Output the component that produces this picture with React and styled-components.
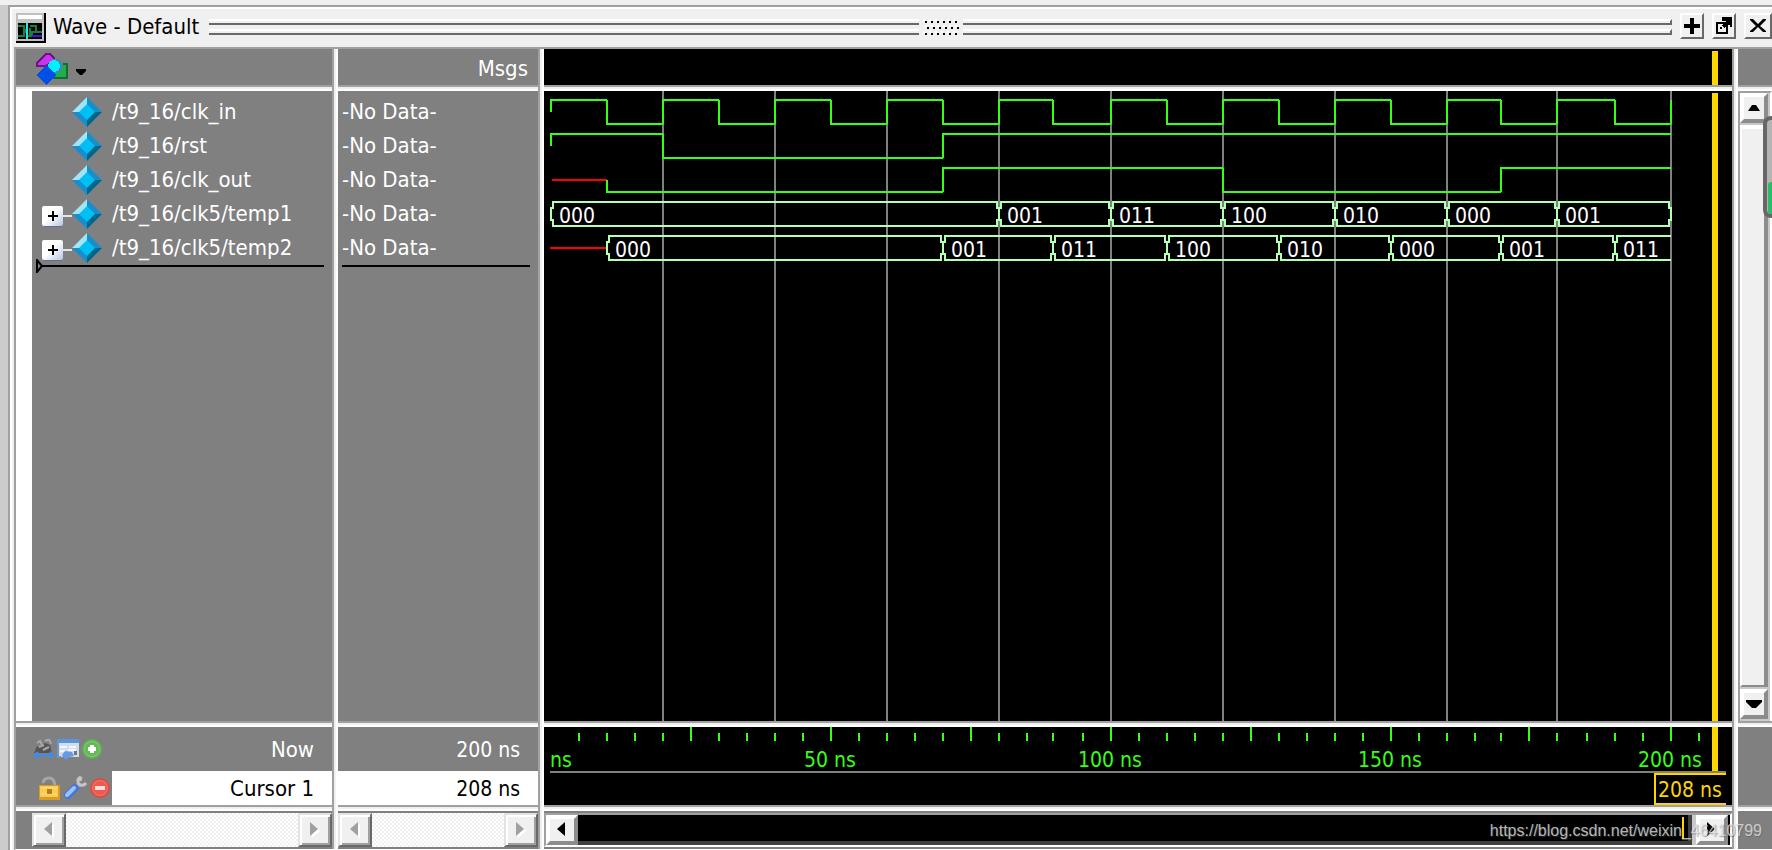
import React from "react";
import styled, { createGlobalStyle, css } from "styled-components";

const C = {
  face: "#f0f0f0",
  pane: "#808080",
  line: "#a0a0a0",
  dark: "#696969",
  green: "#37ff14",
  bus: "#b3ffb3",
  red: "#ff0000",
  gold: "#ffd500",
};
const UI_FONT = '"DejaVu Sans Condensed", "Noto Sans", sans-serif';

const Global = createGlobalStyle`
  * { box-sizing: border-box; }
  body {
    margin: 0;
    background: ${C.face};
    font-family: ${UI_FONT};
    font-size: 22px;
    line-height: 26px;
    color: #000;
  }
  button { font: inherit; padding: 0; margin: 0; border: 0; border-radius: 0; }
  svg { display: block; }
`;

/* ---------- window frame ---------- */
const Page = styled.div`
  position: relative;
  display: flex;
  min-height: 100vh;
  overflow: hidden;
  border-top: 5px solid ${C.face};
  box-shadow: inset 0 2px 0 #fff;
`;
const OuterStrip = styled.div`
  flex: 0 0 8px;
  background: #cccccc;
`;
const Dock = styled.main`
  flex: 1;
  min-width: 0;
  display: flex;
  flex-direction: column;
  border-left: 2px solid ${C.line};
  border-top: 2px solid ${C.line};
  box-shadow: inset 2px 2px 0 #fff, 0 -2px 0 #fff;
`;
const TitleBar = styled.header`
  display: flex;
  align-items: flex-start;
  height: 40px;
  padding: 6px 0 0 6px;
`;
const Title = styled.h1`
  margin: 0 10px 0 7px;
  font-size: 22px;
  font-weight: normal;
  line-height: 28px;
  white-space: nowrap;
`;
const Ridges = styled.div`
  flex: 1;
  display: grid;
  row-gap: 4px;
  padding-top: 6px;
`;
const Ridge = styled.span`
  height: 6px;
  border-top: 2px solid #fff;
  border-bottom: 2px solid ${C.dark};
  border-right: ${(p) => (p.$capped ? `2px solid ${C.dark}` : "0")};
`;
const TitleButtons = styled.div`
  display: flex;
  gap: 8px;
  margin-left: 8px;
`;
const TitleButton = styled.button`
  display: grid;
  place-items: center;
  width: ${(p) => (p.$wide ? 28 : 24)}px;
  height: 26px;
  background: ${C.face};
  border: 2px solid;
  border-color: #fff ${C.dark} ${C.dark} #fff;
`;

/* ---------- columns ---------- */
const Panes = styled.div`
  flex: 1;
  display: grid;
  grid-template-columns: 316px 6px 200px 6px minmax(0, 1fr) 6px 34px;
  margin-left: 4px;
  border-left: 2px solid ${C.line};
  border-top: 2px solid ${C.line};
  border-bottom: 1px solid #fff;
`;
const Sash = styled.div`
  background: linear-gradient(to right, ${C.line} 2px, ${C.face} 2px 4px, #fff 4px);
`;
const Pane = styled.section`
  display: flex;
  flex-direction: column;
  min-width: 0;
  background: ${(p) => (p.$black ? "#000" : C.pane)};
  color: #fff;
`;
const PaneHead = styled.div`
  position: relative;
  display: flex;
  align-items: center;
  justify-content: ${(p) => (p.$end ? "flex-end" : "flex-start")};
  height: 36px;
  padding: 4px 10px 0 20px;
`;
const HSash = styled.div`
  flex: 0 0 6px;
  background: linear-gradient(${C.line} 2px, ${C.face} 2px 4px, #fff 4px);
`;
const PaneBody = styled.div`
  position: relative;
  flex: 1;
  min-height: 0;
  border-left: ${(p) => (p.$gutter ? "16px solid #fff" : "0")};
`;
const PaneFoot = styled.div`
  position: relative;
  height: 78px;
`;
const PaneScroll = styled.div`
  height: 38px;
  padding: 2px 0 2px ${(p) => (p.$indent ? 16 : 0)}px;
`;
const WaveScrollRow = styled(PaneScroll)`
  background: ${C.pane};
`;
const FilterCaret = styled.span`
  margin-left: 8px;
  padding-top: 6px;
`;

/* ---------- signal lists ---------- */
const SignalList = styled.ul`
  list-style: none;
  margin: 0;
  padding: 4px 0 0;
`;
const SignalRow = styled.li`
  display: flex;
  align-items: center;
  height: 34px;
  padding-left: ${(p) => (p.$value ? 4 : 10)}px;
  white-space: nowrap;
`;
const ExpandSlot = styled.span`
  display: flex;
  align-items: center;
  width: 30px;
  padding-top: 4px;
  &::after {
    content: "";
    flex: 1;
    height: 2px;
    background: ${(p) => (p.$on ? "#e6e6e6" : "transparent")};
  }
`;
const ExpandButton = styled.button`
  display: grid;
  place-items: center;
  width: 21px;
  height: 21px;
  border-radius: 2px;
  background: linear-gradient(135deg, #fff 45%, #b4c3e1);
  box-shadow: inset 0 -1px 0 #5f6f8c;
`;
const SignalName = styled.span`
  margin-left: 10px;
`;
const InsertLine = styled.div`
  position: relative;
  height: 2px;
  background: #000;
  margin: 0 8px 0 ${(p) => (p.$marked ? 10 : 4)}px;
`;
const InsertMarker = styled.svg`
  position: absolute;
  left: -6px;
  top: -6px;
`;

/* ---------- footer rows ---------- */
const FootRow = styled.div`
  display: flex;
  align-items: center;
  height: ${(p) => (p.$cursor ? 34 : 44)}px;
  color: ${(p) => (p.$cursor ? "#000" : "#fff")};
`;
const FootIcons = styled.div`
  display: flex;
  align-items: center;
  gap: 3px;
  flex: 0 0 96px;
  padding-left: ${(p) => (p.$shift ? 23 : 18)}px;
`;
const IconButton = styled.button`
  background: transparent;
`;
const FootText = styled.span`
  flex: 1;
  height: 100%;
  display: flex;
  align-items: center;
  justify-content: flex-end;
  padding: 2px 18px 0 0;
  font-size: ${(p) => (p.$number ? 21 : 22)}px;
  background: ${(p) => (p.$cursor ? "#fff" : "transparent")};
`;

/* ---------- scrollbars ---------- */
const ScrollTrack = styled.div`
  display: flex;
  height: 34px;
  ${(p) =>
    p.$wave
      ? css`
          background: #000;
          border: 2px solid;
          border-color: ${C.line} #fff #fff ${C.line};
          padding-right: 2px;
        `
      : css`
          background: repeating-conic-gradient(${C.face} 0 25%, #fff 0 50%) 0 0 / 4px 4px;
        `}
`;
const ScrollButton = styled.button`
  display: grid;
  place-items: center;
  width: 34px;
  height: 100%;
  background: ${C.face};
  border: 2px solid;
  border-color: #e3e3e3 ${C.dark} ${C.dark} #e3e3e3;
  box-shadow: inset 2px 2px 0 #fff, inset -2px -2px 0 ${C.line};
`;
const WaveScrollButton = styled.button`
  display: grid;
  place-items: center;
  width: 32px;
  height: 100%;
  background: ${C.face};
  border: 4px solid;
  border-color: #fff #8c8c8c #8c8c8c #fff;
`;
const Spring = styled.div`
  flex: 1;
  display: flex;
  justify-content: flex-end;
  ${(p) =>
    p.$wave &&
    css`
      padding: 2px 4px 2px 0;
      border: solid;
      border-width: 0 4px 4px 0;
      border-color: #404040;
      box-shadow: 4px 0 0 #c8c8c8;
      margin-right: 4px;
    `}
`;
const CursorTick = styled.span`
  width: 2px;
  background: ${C.gold};
`;
const VScroll = styled.div`
  height: 100%;
  display: flex;
  flex-direction: column;
  gap: 2px;
  padding: 0 2px 2px 0;
  background: #c8c8c8;
  border-left: 2px solid ${C.line};
  border-top: 2px solid ${C.line};
  border-right: 2px solid #fff;
`;
const VButton = styled.button`
  display: grid;
  place-items: center;
  height: 30px;
  background: ${C.face};
  border: 4px solid;
  border-color: #fff #8c8c8c #8c8c8c #fff;
`;
const VThumb = styled.div`
  flex: 1;
  background: ${C.face};
  border: solid;
  border-width: 4px 4px 2px 2px;
  border-color: #fff #8c8c8c #8c8c8c #fff;
`;

/* ---------- overlays ---------- */
const CursorBar = styled.span`
  position: absolute;
  right: 14px;
  top: ${(p) => p.$top || 0}px;
  bottom: ${(p) => p.$bottom || 0}px;
  width: 6px;
  background: ${C.gold};
`;
const CursorTag = styled.output`
  position: absolute;
  right: 6px;
  bottom: 0;
  width: 72px;
  height: 32px;
  padding-left: 2px;
  font-size: 21px;
  line-height: 30px;
  background: #000;
  color: ${C.gold};
  border: 2px solid ${C.gold};
  border-right: 0;
  white-space: nowrap;
`;
const SideHandle = styled.div`
  position: absolute;
  right: -12px;
  top: 111px;
  width: 21px;
  height: 102px;
  border: 4px solid rgba(70, 70, 70, 0.7);
  border-radius: 8px;
  background: #b4b4b4;
  &::after {
    content: "";
    position: absolute;
    left: 1px;
    bottom: 0;
    width: 14px;
    height: 32px;
    border-radius: 3px;
    background: #28bd68;
  }
`;
const Watermark = styled.a`
  position: absolute;
  right: 10px;
  bottom: 6px;
  font: 16px/26px "Liberation Sans", Arial, sans-serif;
  color: rgba(225, 225, 225, 0.8);
  text-shadow: 1px 1px 1px rgba(90, 90, 90, 0.5);
  text-decoration: none;
`;
const Plot = styled.svg`
  position: absolute;
  inset: 0;
  width: 100%;
  height: 100%;
  font-size: 21px;
`;

/* ---------- icons ---------- */
const WaveIcon = () => (
  <svg width="30" height="30" viewBox="0 0 30 30" shapeRendering="crispEdges" aria-hidden="true">
    <rect width="30" height="30" fill="#000" />
    <rect width="28" height="28" fill="#c0c0c0" />
    <rect x="2" y="2" width="24" height="4" fill="#fff" />
    <rect x="2" y="10" width="24" height="16" fill="#000" />
    <path d="M2 13h6v4h2M14 13h6v6h6M2 23h6v-4h2M14 15v8M12 23h4v-4h4M20 13v5" fill="none" stroke="#118040" strokeWidth="2" />
    <path d="M16 23h10" stroke="#4810e0" strokeWidth="2" />
    <path d="M11 10v16" stroke="#30e0e8" strokeWidth="2" />
  </svg>
);
const ObjectsIcon = () => (
  <svg width="32" height="32" viewBox="0 0 32 32" shapeRendering="crispEdges" aria-hidden="true">
    <path d="M1 13V10L10 1h4l4 4v3l-8 5Z" fill="#c836ec" stroke="#70108a" strokeWidth="2" />
    <rect x="17" y="11" width="14" height="14" fill="#1cb045" stroke="#146b38" strokeWidth="2" />
    <circle cx="20" cy="13" r="7" fill="#4689a4" />
    <circle cx="18" cy="13" r="6" fill="#00f0ff" />
    <path d="M10 12 20 22 10 32 0 22Z" fill="#0050e6" />
  </svg>
);
const Gem = () => (
  <svg width="30" height="30" viewBox="0 0 30 30" aria-hidden="true">
    <path d="M15 0v15H0Z" fill="#a0e6f8" />
    <path d="M15 0v15h15Z" fill="#158fce" />
    <path d="M0 15h15v15Z" fill="#158fce" />
    <path d="M30 15H15v15Z" fill="#00668c" />
    <path d="M15 7l8 8-8 8-8-8Z" fill="#00c0f3" />
  </svg>
);
const TRIANGLES = {
  left: ["M8 0v14L0 7Z", 10, 16],
  right: ["M0 0v14l8-7Z", 10, 16],
  up: ["M0 6h12L8 0H4Z", 12, 6],
  down: ["M0 0h16v2L10 8H6L0 2Z", 16, 8],
  caret: ["M0 0h10v2L6 6H4L0 2Z", 10, 6],
};
const Tri = ({ dir, disabled }) => {
  const [d, w, h] = TRIANGLES[dir];
  return (
    <svg width={w} height={h} aria-hidden="true">
      {disabled && <path d={d} fill="#fff" transform="translate(2 2)" />}
      <path d={d} fill={disabled ? C.line : "#000"} />
    </svg>
  );
};
const PlusIcon = () => (
  <svg width="16" height="16" viewBox="0 0 16 16" aria-hidden="true">
    <path d="M0 8h16M8 0v16" stroke="#000" strokeWidth="4" />
  </svg>
);
const UndockIcon = () => (
  <svg width="18" height="18" viewBox="0 0 18 18" shapeRendering="crispEdges" aria-hidden="true">
    <rect x="2" y="6" width="10" height="10" fill="none" stroke="#000" strokeWidth="2" />
    <rect x="5" y="10" width="2" height="2" />
    <path d="M8 10 14 4" stroke="#000" strokeWidth="3" />
    <path d="M7 0h10v10h-2V8h-2V6h-2V4H7Z" />
  </svg>
);
const CloseIcon = () => (
  <svg width="16" height="16" viewBox="0 0 16 16" aria-hidden="true">
    <path d="M0 1h3l5 5 5-5h3v1l-6 6 6 5v1h-3L8 9l-5 5H0v-1l6-5-6-6Z" />
  </svg>
);
const SmallPlus = () => (
  <svg width="10" height="10" aria-hidden="true">
    <path d="M0 5h10M5 0v10" stroke="#000" strokeWidth="2" />
  </svg>
);
const GripDots = () => (
  <svg width="44" height="24" shapeRendering="crispEdges" aria-hidden="true">
    {[0, 1, 2].map((r) =>
      [0, 1, 2, 3, 4, 5].map((c) => {
        const x = 6 + c * 6 + (r === 1 ? 2 : 0);
        const y = 8 + r * 6;
        return (
          <g key={`${r}-${c}`}>
            <rect x={x - 2} y={y - 2} width="2" height="2" fill="#fff" />
            <rect x={x} y={y} width="2" height="2" />
          </g>
        );
      })
    )}
  </svg>
);
const SpanIcon = () => (
  <svg width="20" height="20" viewBox="0 0 20 20" aria-hidden="true">
    <path d="M0 14 3 7l3 2 1-3 4-2 5 2 2 8Z" fill="#555" />
    <path d="M3 4l3-2 2 4M11 2l4-2 2 5M5 8l5-2M9 11l6-3" stroke="#a8a8a8" strokeWidth="2" fill="none" />
    <path d="M1 16h18M4 13l-3 3 3 3M16 13l3 3-3 3" stroke="#3b8cf0" strokeWidth="2" fill="none" />
  </svg>
);
const NoteIcon = () => (
  <svg width="22" height="22" viewBox="0 0 22 22" aria-hidden="true">
    <rect x="0" y="1" width="22" height="18" fill="#d2dcea" />
    <rect x="0" y="1" width="22" height="4" fill="#5c94dc" />
    <path d="M1 3v16h3" stroke="#6c96cc" strokeWidth="2" fill="none" />
    <path d="M3 9h7M3 13h5M12 9h7M11 12h8" stroke="#f4f6fa" strokeWidth="2" />
    <path d="M5 17l3-4 7 1 2 4-5 1-3 3-3-3Z" fill="#6698e4" />
    <rect x="17" y="13" width="3" height="4" fill="#777" />
  </svg>
);
const RoundIcon = ({ add }) => (
  <svg width="20" height="20" viewBox="0 0 20 20" aria-hidden="true">
    <circle cx="10" cy="10" r="10" fill={add ? "#5fb352" : "#dc4a40"} />
    <circle cx="10" cy="10" r="8" fill={add ? "#84ca76" : "#f27a6c"} />
    <circle cx="10" cy="10" r="7" fill={add ? "#62b955" : "#ea5a4e"} />
    {add ? (
      <path d="M10 6v8M6 10h8" stroke="#fff" strokeWidth="4" />
    ) : (
      <path d="M5 10h10" stroke="#fbdcd8" strokeWidth="4" />
    )}
  </svg>
);
const LockIcon = () => (
  <svg width="21" height="24" viewBox="0 0 21 24" aria-hidden="true">
    <path d="M4 7q1-5 6-5t6 7" fill="none" stroke="#a6a6a6" strokeWidth="3" />
    <rect x="0" y="9" width="21" height="15" fill="#d99a2c" />
    <rect x="1" y="10" width="18" height="11" fill="#fbcb50" />
    <path d="M2 12h16M2 18h16" stroke="#fde28a" />
    <rect x="8" y="13" width="5" height="5" fill="#b87c20" />
  </svg>
);
const WrenchIcon = () => (
  <svg width="24" height="24" viewBox="0 0 24 24" aria-hidden="true">
    <path d="M12 12l4-4" stroke="#c4c4c4" strokeWidth="4" />
    <path d="M18 1q-5 2-2 7 4 3 7-1M18 1l-1 4" stroke="#c4c4c4" strokeWidth="3" fill="none" />
    <path d="M5 19 12 12" stroke="#4478d4" strokeWidth="8" strokeLinecap="round" />
    <path d="M4 19 11 12" stroke="#9cc0fa" strokeWidth="4" strokeLinecap="round" />
  </svg>
);

/* ---------- waveform data ---------- */
const SNAP = { 90: 509, 170: 957, 175: 985, 180: 1013, 190: 1071, 195: 1099 };
const px = (t) => SNAP[t] ?? 7 + Math.round(t * 5.6);

const SIGNALS = [
  { name: "/t9_16/clk_in", kind: "bit", steps: Array.from({ length: 21 }, (_, i) => [i * 10, i % 2 ? 0 : 1]) },
  { name: "/t9_16/rst", kind: "bit", steps: [[0, 1], [20, 0], [70, 1]] },
  { name: "/t9_16/clk_out", kind: "bit", steps: [[0, "x"], [10, 0], [70, 1], [120, 0], [170, 1]] },
  {
    name: "/t9_16/clk5/temp1", kind: "bus", closed: true,
    steps: [[0, "000"], [80, "001"], [100, "011"], [120, "100"], [140, "010"], [160, "000"], [180, "001"]],
  },
  {
    name: "/t9_16/clk5/temp2", kind: "bus",
    steps: [[0, "x"], [10, "000"], [70, "001"], [90, "011"], [110, "100"], [130, "010"], [150, "000"], [170, "001"], [190, "011"]],
  },
];

function BitTrace({ signal, mid }) {
  const y = { 1: mid - 12, 0: mid + 12, x: mid };
  let d = "";
  let bad = null;
  signal.steps.forEach(([t, v], i) => {
    const next = signal.steps[i + 1];
    const x0 = px(t);
    const x1 = next ? px(next[0]) : px(200);
    if (v === "x") bad = <path d={`M${x0 + 1} ${mid}H${x1}`} stroke={C.red} />;
    else {
      const prev = i ? signal.steps[i - 1][1] : "x";
      d += `M${x0} ${y[prev]}V${y[v]}H${x1}`;
    }
  });
  return (
    <g fill="none" strokeWidth="2">
      {bad}
      <path d={d} stroke={C.green} />
    </g>
  );
}

function BusTrace({ signal, mid }) {
  const top = mid - 12;
  const bot = mid + 12;
  return (
    <g>
      {signal.steps.map(([t, v], i) => {
        const next = signal.steps[i + 1];
        const x0 = px(t);
        const x1 = next ? px(next[0]) : px(200);
        if (v === "x")
          return <path key={t} d={`M${x0 - 1} ${mid}H${x1}`} stroke={C.red} strokeWidth="2" />;
        const open = !next && !signal.closed;
        const right = open
          ? ""
          : `M${x1 - 2} ${top}v7M${x1 - 2} ${bot}v-7M${x1} ${mid - 7}v14`;
        const end = open ? x1 : x1 - 1;
        return (
          <g key={t}>
            <path
              d={`M${end} ${top}H${x0 + 2}v7M${x0} ${mid - 7}v14M${x0 + 2} ${mid + 5}V${bot}H${end}${right}`}
              fill="none"
              stroke={C.bus}
              strokeWidth="2"
            />
            <text x={x0 + 8} y={mid + 9} fill="#fff">{v}</text>
          </g>
        );
      })}
    </g>
  );
}

function Waves() {
  const grid = [20, 40, 60, 80, 100, 120, 140, 160, 180, 200];
  return (
    <Plot role="img" aria-label="Signal waveforms" shapeRendering="crispEdges">
      {grid.map((t) => (
        <rect key={t} x={px(t) - 1} y="0" width="2" height="100%" fill={C.pane} />
      ))}
      {SIGNALS.map((s, i) =>
        s.kind === "bit" ? (
          <BitTrace key={s.name} signal={s} mid={21 + i * 34} />
        ) : (
          <BusTrace key={s.name} signal={s} mid={21 + i * 34} />
        )
      )}
    </Plot>
  );
}

const RulerStrip = styled.div`
  position: relative;
  height: 46px;
  margin: 0 6px;
  border-bottom: 2px solid ${C.pane};
`;

function Ruler() {
  const ticks = Array.from({ length: 41 }, (_, i) => (i + 1) * 5);
  return (
    <RulerStrip>
      <Plot role="img" aria-label="Time ruler" shapeRendering="crispEdges">
        {ticks.map((t) => (
          <rect
            key={t}
            x={px(t) - 7}
            y={t % 25 ? 6 : 0}
            width="2"
            height={t % 25 ? 8 : 14}
            fill={C.green}
          />
        ))}
        <text x="0" y="40" fill={C.green}>ns</text>
        {[50, 100, 150, 200].map((t) => (
          <text key={t} x={px(t) - 7} y="40" textAnchor="middle" fill={C.green}>
            {t} ns
          </text>
        ))}
      </Plot>
    </RulerStrip>
  );
}

function HScroll({ label }) {
  return (
    <ScrollTrack>
      <ScrollButton type="button" disabled aria-label={`Scroll ${label} left`}>
        <Tri dir="left" disabled />
      </ScrollButton>
      <Spring />
      <ScrollButton type="button" disabled aria-label={`Scroll ${label} right`}>
        <Tri dir="right" disabled />
      </ScrollButton>
    </ScrollTrack>
  );
}

export default function App() {
  return (
    <>
      <Global />
      <Page>
        <OuterStrip />
        <Dock>
          <TitleBar>
            <WaveIcon />
            <Title>Wave - Default</Title>
            <Ridges><Ridge /><Ridge /></Ridges>
            <GripDots />
            <Ridges><Ridge $capped /><Ridge $capped /></Ridges>
            <TitleButtons>
              <TitleButton type="button" aria-label="Zoom window"><PlusIcon /></TitleButton>
              <TitleButton type="button" aria-label="Undock"><UndockIcon /></TitleButton>
              <TitleButton type="button" $wide aria-label="Close"><CloseIcon /></TitleButton>
            </TitleButtons>
          </TitleBar>

          <Panes>
            <Pane aria-label="Signals">
              <PaneHead>
                <IconButton type="button" aria-label="Object filter"><ObjectsIcon /></IconButton>
                <FilterCaret><Tri dir="caret" /></FilterCaret>
              </PaneHead>
              <HSash />
              <PaneBody $gutter>
                <SignalList>
                  {SIGNALS.map((s) => (
                    <SignalRow key={s.name}>
                      <ExpandSlot $on={s.kind === "bus"}>
                        {s.kind === "bus" && (
                          <ExpandButton type="button" aria-label={`Expand ${s.name}`}>
                            <SmallPlus />
                          </ExpandButton>
                        )}
                      </ExpandSlot>
                      <Gem />
                      <SignalName>{s.name}</SignalName>
                    </SignalRow>
                  ))}
                </SignalList>
                <InsertLine $marked>
                  <InsertMarker width="8" height="14" aria-hidden="true">
                    <path d="M1 1v12l5-6Z" fill="none" stroke="#000" strokeWidth="2" />
                  </InsertMarker>
                </InsertLine>
              </PaneBody>
              <HSash />
              <PaneFoot>
                <FootRow>
                  <FootIcons>
                    <IconButton type="button" aria-label="Time span"><SpanIcon /></IconButton>
                    <IconButton type="button" aria-label="Edit grid"><NoteIcon /></IconButton>
                    <IconButton type="button" aria-label="Add cursor"><RoundIcon add /></IconButton>
                  </FootIcons>
                  <FootText>Now</FootText>
                </FootRow>
                <FootRow $cursor>
                  <FootIcons $shift>
                    <IconButton type="button" aria-label="Lock cursor"><LockIcon /></IconButton>
                    <IconButton type="button" aria-label="Edit cursor"><WrenchIcon /></IconButton>
                    <IconButton type="button" aria-label="Remove cursor"><RoundIcon /></IconButton>
                  </FootIcons>
                  <FootText $cursor>Cursor 1</FootText>
                </FootRow>
              </PaneFoot>
              <HSash />
              <PaneScroll $indent><HScroll label="names" /></PaneScroll>
            </Pane>

            <Sash />

            <Pane aria-label="Values">
              <PaneHead $end>Msgs</PaneHead>
              <HSash />
              <PaneBody>
                <SignalList>
                  {SIGNALS.map((s) => (
                    <SignalRow key={s.name} $value>-No Data-</SignalRow>
                  ))}
                </SignalList>
                <InsertLine />
              </PaneBody>
              <HSash />
              <PaneFoot>
                <FootRow><FootText $number>200 ns</FootText></FootRow>
                <FootRow $cursor><FootText $number $cursor>208 ns</FootText></FootRow>
              </PaneFoot>
              <HSash />
              <PaneScroll><HScroll label="values" /></PaneScroll>
            </Pane>

            <Sash />

            <Pane $black aria-label="Waveforms">
              <PaneHead><CursorBar $top={2} /></PaneHead>
              <HSash />
              <PaneBody>
                <Waves />
                <CursorBar $top={2} />
              </PaneBody>
              <HSash />
              <PaneFoot>
                <Ruler />
                <CursorBar $bottom={34} />
                <CursorTag>208 ns</CursorTag>
              </PaneFoot>
              <HSash />
              <WaveScrollRow>
                <ScrollTrack $wave>
                  <WaveScrollButton type="button" aria-label="Scroll waves left"><Tri dir="left" /></WaveScrollButton>
                  <Spring $wave><CursorTick /></Spring>
                  <WaveScrollButton type="button" aria-label="Scroll waves right"><Tri dir="right" /></WaveScrollButton>
                </ScrollTrack>
              </WaveScrollRow>
            </Pane>

            <Sash />

            <Pane>
              <PaneHead />
              <HSash />
              <PaneBody>
                <VScroll>
                  <VButton type="button" aria-label="Scroll up"><Tri dir="up" /></VButton>
                  <VThumb />
                  <VButton type="button" aria-label="Scroll down"><Tri dir="down" /></VButton>
                </VScroll>
              </PaneBody>
              <HSash />
              <PaneFoot />
              <HSash />
              <PaneScroll />
            </Pane>
          </Panes>
        </Dock>
        <SideHandle />
        <Watermark href="https://blog.csdn.net/weixin_46410799">
          https://blog.csdn.net/weixin_46410799
        </Watermark>
      </Page>
    </>
  );
}
